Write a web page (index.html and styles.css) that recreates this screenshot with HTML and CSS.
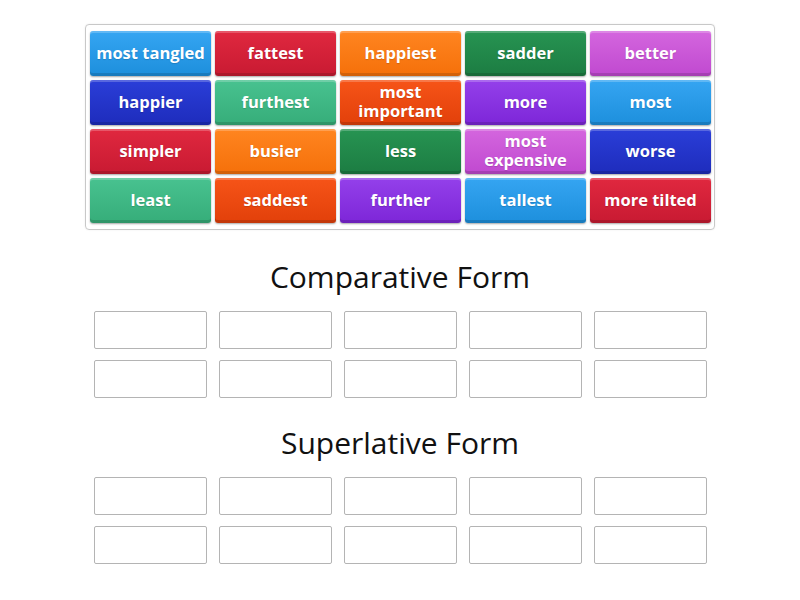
FILE: index.html
```html
<!DOCTYPE html>
<html>
<head>
<meta charset="utf-8">
<link rel="stylesheet" href="styles.css">
</head>
<body>
<div class="page">
  <div class="bank">
    <div class="tile c-blue">most tangled</div>
    <div class="tile c-red">fattest</div>
    <div class="tile c-orange">happiest</div>
    <div class="tile c-green">sadder</div>
    <div class="tile c-pink">better</div>
    <div class="tile c-navy">happier</div>
    <div class="tile c-teal">furthest</div>
    <div class="tile c-tomato two">most important</div>
    <div class="tile c-violet">more</div>
    <div class="tile c-blue">most</div>
    <div class="tile c-red">simpler</div>
    <div class="tile c-orange">busier</div>
    <div class="tile c-green">less</div>
    <div class="tile c-pink two">most expensive</div>
    <div class="tile c-navy">worse</div>
    <div class="tile c-teal">least</div>
    <div class="tile c-tomato">saddest</div>
    <div class="tile c-violet">further</div>
    <div class="tile c-blue">tallest</div>
    <div class="tile c-red">more tilted</div>
  </div>

  <h2 class="group-title first">Comparative Form</h2>
  <div class="slots">
    <div class="slot"></div><div class="slot"></div><div class="slot"></div><div class="slot"></div><div class="slot"></div>
    <div class="slot"></div><div class="slot"></div><div class="slot"></div><div class="slot"></div><div class="slot"></div>
  </div>

  <h2 class="group-title second">Superlative Form</h2>
  <div class="slots">
    <div class="slot"></div><div class="slot"></div><div class="slot"></div><div class="slot"></div><div class="slot"></div>
    <div class="slot"></div><div class="slot"></div><div class="slot"></div><div class="slot"></div><div class="slot"></div>
  </div>
</div>
</body>
</html>
```

FILE: styles.css
```css
* { box-sizing: border-box; }
html, body { margin: 0; padding: 0; background: #fff; }
body { font-family: "Open Sans", "Liberation Sans", sans-serif; }

.page {
  display: flex;
  flex-direction: column;
  align-items: center;
  padding-top: 24px;
}

.bank {
  width: 630px;
  border: 1px solid #c8c8c8;
  border-radius: 4px;
  padding: 6px 3px 6px 4px;
  display: grid;
  grid-template-columns: repeat(5, 121px);
  grid-auto-rows: 45px;
  gap: 4px;
  box-shadow: 0 0 2px rgba(0,0,0,0.08);
}

.tile {
  border-radius: 3px;
  color: #fff;
  font-weight: 700;
  font-size: 16.5px;
  line-height: 19px;
  display: flex;
  align-items: center;
  justify-content: center;
  text-align: center;
  padding: 0 3px 3px;
  text-shadow: 0 1px 1px rgba(0,0,0,0.15);
  box-shadow: inset 0 2px 0 rgba(255,255,255,0.22),
              inset 0 -3px 0 rgba(0,0,0,0.14),
              0 1px 2px rgba(0,0,0,0.35);
}
.tile.two { padding-bottom: 3px; }

.c-blue   { background: linear-gradient(#35a5f2, #1d8fdc); }
.c-red    { background: linear-gradient(#e0283f, #c81a32); }
.c-orange { background: linear-gradient(#ff8520, #f5700a); }
.c-green  { background: linear-gradient(#279452, #1c7c42); }
.c-pink   { background: linear-gradient(#d466de, #c049d0); }
.c-navy   { background: linear-gradient(#2a3ed8, #1e2cbc); }
.c-teal   { background: linear-gradient(#48c290, #36ad79); }
.c-tomato { background: linear-gradient(#f65418, #e2400a); }
.c-violet { background: linear-gradient(#9440ea, #7d26d8); }

.group-title {
  margin: 0;
  font-weight: 400;
  font-size: 30px;
  line-height: 38px;
  color: #111;
  text-align: center;
}
.group-title.first { margin-top: 28px; margin-bottom: 15px; }
.group-title.second { margin-top: 26px; margin-bottom: 15px; }

.slots {
  display: grid;
  grid-template-columns: repeat(5, 113px);
  grid-auto-rows: 38px;
  column-gap: 12px;
  row-gap: 11px;
}

.slot {
  border: 1px solid #b4b4b4;
  border-radius: 2px;
  background: #fff;
}
```
